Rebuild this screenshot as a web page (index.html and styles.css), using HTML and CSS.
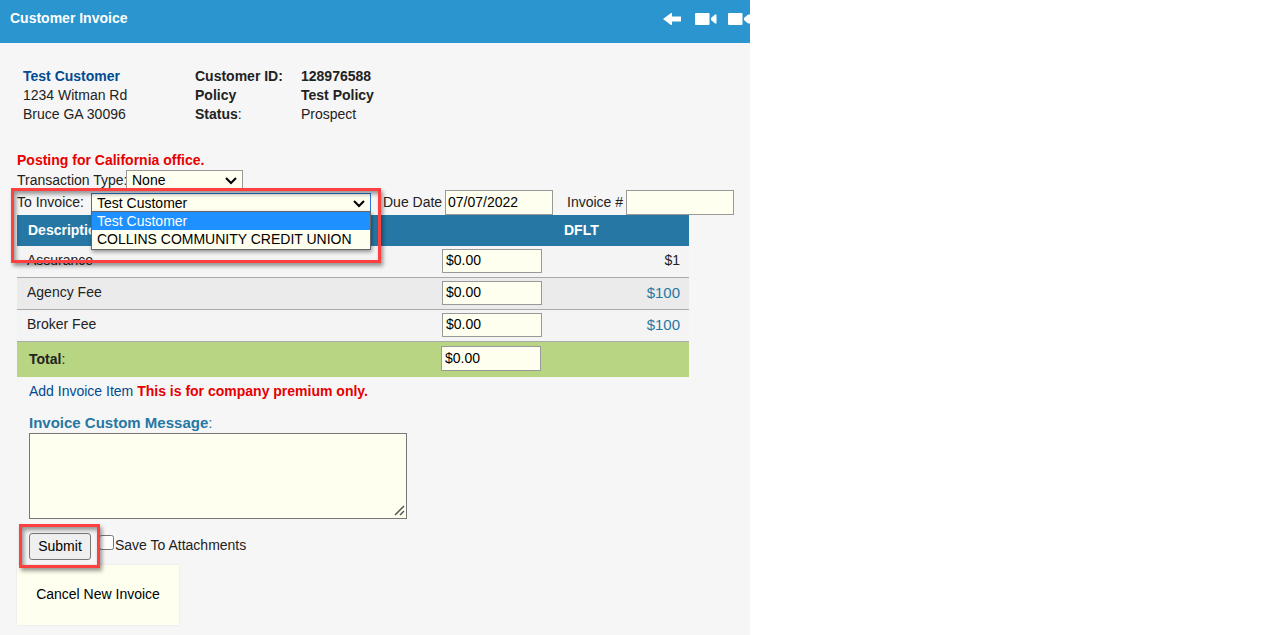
FILE: index.html
```html
<!DOCTYPE html>
<html lang="en">
<head>
    <meta charset="UTF-8">
    <meta name="viewport" content="width=device-width, initial-scale=1.0">
    <title>Customer Invoice</title>
    <link rel="stylesheet" href="styles.css">
</head>
<body>
    <div class="container">
        <header class="top-bar">
            <h1>Customer Invoice</h1>
            <div class="top-icons">
                <button type="button" class="icon-button" aria-label="Back">
                    <svg width="18" height="12" viewBox="0 0 18 12" fill="#fff"><path d="M0 6 8 0H9V3.500H18V8.500H9V12H8Z"/></svg>
                </button>
                <button type="button" class="icon-button" aria-label="Video">
                    <svg width="22" height="12" viewBox="0 0 22 12" fill="#fff"><rect width="14.500" height="12" rx="1"/><path d="M16 5 20 1.500H21.500V10.500H20L16 7Z"/></svg>
                </button>
                <button type="button" class="icon-button" aria-label="Video help">
                    <svg width="22" height="12" viewBox="0 0 22 12" fill="#fff"><rect width="14.500" height="12" rx="1"/><path d="M16 5 20 1.500H22V10.500H20L16 7Z"/></svg>
                </button>
            </div>
        </header>

        <form class="invoice-form">
            <div class="customer-info">
                <div>
                    <a href="#" class="customer-name">Test Customer</a><br>
                    1234 Witman Rd<br>
                    Bruce GA 30096
                </div>
                <div>
                    <b>Customer ID:</b><br>
                    <b>Policy</b><br>
                    <b>Status</b>:
                </div>
                <div>
                    <b>128976588</b><br>
                    <b>Test Policy</b><br>
                    Prospect
                </div>
            </div>

            <p class="warning">Posting for California office.</p>

            <div class="form-row type-row">
                <label for="transactionType">Transaction Type:</label>
                <div class="dropdown">
                    <select id="transactionType" name="transactionType">
                        <option>None</option>
                    </select>
                    <svg class="arrow" width="12" height="8" viewBox="0 0 12 8"><path d="M1 1 6 6 11 1" fill="none" stroke="#000" stroke-width="2"/></svg>
                </div>
            </div>

            <div class="form-row">
                <div class="to-invoice highlight">
                    <label for="toInvoice">To Invoice:</label>
                    <div class="dropdown open">
                        <select id="toInvoice" name="toInvoice">
                            <option>Test Customer</option>
                            <option>COLLINS COMMUNITY CREDIT UNION</option>
                        </select>
                        <svg class="arrow" width="12" height="8" viewBox="0 0 12 8"><path d="M1 1 6 6 11 1" fill="none" stroke="#000" stroke-width="2"/></svg>
                        <ul class="dropdown-list">
                            <li class="selected">Test Customer</li>
                            <li>COLLINS COMMUNITY CREDIT UNION</li>
                        </ul>
                    </div>
                </div>
                <label for="dueDate" class="due-label">Due Date</label>
                <input type="text" id="dueDate" name="dueDate" value="07/07/2022">
                <label for="invoiceNo" class="number-label">Invoice #</label>
                <input type="text" id="invoiceNo" name="invoiceNo">
            </div>

            <table class="items">
                <thead>
                    <tr>
                        <th class="desc">Description</th>
                        <th class="amount"></th>
                        <th class="default">DFLT</th>
                    </tr>
                </thead>
                <tbody>
                    <tr>
                        <td><label for="assurance">Assurance</label></td>
                        <td><input type="text" id="assurance" value="$0.00"></td>
                        <td class="price">$1</td>
                    </tr>
                    <tr>
                        <td><label for="agencyFee">Agency Fee</label></td>
                        <td><input type="text" id="agencyFee" value="$0.00"></td>
                        <td class="price"><a href="#">$100</a></td>
                    </tr>
                    <tr>
                        <td><label for="brokerFee">Broker Fee</label></td>
                        <td><input type="text" id="brokerFee" value="$0.00"></td>
                        <td class="price"><a href="#">$100</a></td>
                    </tr>
                </tbody>
                <tfoot>
                    <tr>
                        <td><label for="total"><b>Total</b>:</label></td>
                        <td><input type="text" id="total" value="$0.00"></td>
                        <td></td>
                    </tr>
                </tfoot>
            </table>

            <div class="form-footer">
                <p class="add-item"><a href="#">Add Invoice Item</a> <span class="warning">This is for company premium only.</span></p>
                <label for="message" class="message-label"><b>Invoice Custom Message</b>:</label>
                <div class="message-box">
                    <textarea id="message" name="message"></textarea>
                    <svg class="grip" width="11" height="11" viewBox="0 0 11 11"><path d="M1 10 10 1M6 10 10 6" fill="none" stroke="#555" stroke-width="1.500"/></svg>
                </div>
                <div class="submit-row">
                    <div class="submit-wrap highlight">
                        <button type="submit" class="submit-button">Submit</button>
                    </div>
                    <input type="checkbox" id="saveAttachments">
                    <label for="saveAttachments">Save To Attachments</label>
                </div>
            </div>

            <button type="button" class="cancel-button">Cancel New Invoice</button>
        </form>
    </div>
</body>
</html>
```
FILE: styles.css
```css
* {
    box-sizing: border-box;
}

body {
    font-family: "Liberation Sans", Arial, sans-serif;
    font-size: 14px;
    line-height: 19px;
    margin: 0;
    background-color: #fff;
    color: #222;
}

.container {
    max-width: 750px;
    min-height: 100vh;
    background-color: #f6f6f6;
}

.top-bar {
    display: flex;
    justify-content: space-between;
    height: 43px;
    padding: 9px 0 0 10px;
    background-color: #2a95ce;
    overflow: hidden;
}

h1 {
    margin: 0;
    font-size: 14px;
    line-height: 19px;
    color: #fff;
}

.top-icons {
    display: flex;
    align-items: flex-start;
    gap: 11px;
    padding-top: 4px;
}

.icon-button {
    display: flex;
    padding: 0;
    border: none;
    background: none;
    cursor: pointer;
}

.icon-button:first-child {
    margin-right: 3px;
}

.invoice-form {
    padding: 24px 16px 9px 17px;
}

.customer-info {
    display: grid;
    grid-template-columns: 172px 106px 1fr;
    padding-left: 6px;
    margin-bottom: 26px;
}

a {
    color: #004b91;
    text-decoration: none;
}

.customer-name {
    font-weight: bold;
}

.warning {
    margin: 0;
    font-weight: bold;
    color: #e60000;
}

p.warning {
    line-height: 20px;
}

.form-row {
    display: flex;
    align-items: center;
    height: 25px;
}

.type-row {
    height: 20px;
}

.type-row label {
    width: 109px;
    white-space: nowrap;
}

input,
select,
textarea,
button {
    font-family: inherit;
    font-size: 14px;
}

input[type="text"],
select,
textarea {
    background-color: #fffff0;
    border: 1px solid #999;
    border-radius: 0;
    color: #000;
    outline: none;
}

input[type="text"] {
    width: 108px;
    height: 25px;
    padding: 0 3px 2px 2px;
}

select {
    appearance: none;
    display: block;
    width: 117px;
    height: 20px;
    padding: 0 5px;
}

.dropdown {
    position: relative;
}

.arrow {
    position: absolute;
    top: 7px;
    right: 6px;
    pointer-events: none;
}

.to-invoice {
    display: flex;
    align-items: center;
    width: 354px;
}

.to-invoice label {
    width: 74px;
}

/* red callout frame */
.highlight {
    position: relative;
}

.highlight::after {
    content: "";
    position: absolute;
    z-index: 3;
    border: 3px solid #ff4040;
    box-shadow: 2px 3px 4px rgba(0, 0, 0, 0.4), inset 2px 3px 4px rgba(0, 0, 0, 0.4);
    pointer-events: none;
}

.to-invoice::after {
    inset: -5px -10px -50px -6px;
}

.open {
    flex: 1;
}

.open select {
    width: 100%;
    border-color: #2a74d5;
}

.dropdown-list {
    position: absolute;
    z-index: 2;
    top: 18px;
    left: 0;
    right: 0;
    margin: 0;
    padding: 0 0 1px;
    list-style: none;
    border: 1px solid #666;
    background-color: #fffff0;
    color: #000;
    line-height: 18px;
    box-shadow: 1px 2px 4px rgba(0, 0, 0, 0.4);
}

.dropdown-list li {
    padding-left: 5px;
    white-space: nowrap;
}

.dropdown-list .selected {
    background-color: #1e90ff;
    color: #fff;
}

.due-label {
    width: 62px;
    margin-left: 12px;
}

.number-label {
    width: 59px;
    margin-left: 14px;
}

.items {
    width: 672px;
    max-width: 100%;
    table-layout: fixed;
    border-collapse: separate;
    border-spacing: 0;
}

.items th {
    height: 31px;
    padding: 0 11px;
    background-color: #2677a4;
    color: #fff;
    text-align: left;
}

.items .amount {
    width: 111px;
}

.items .default {
    width: 136px;
}

.items td {
    height: 32px;
    padding: 0 10px 2px;
    border-bottom: 1px solid #aaa;
    background-color: #f4f4f4;
}

.items td:nth-child(2) {
    padding: 0 0 2px;
}

.items tbody tr:nth-child(2) td {
    background-color: #ebebeb;
}

.items td input[type="text"] {
    display: block;
    width: 100px;
    height: 24px;
    padding-left: 3px;
}

.items td.price {
    padding-right: 9px;
    text-align: right;
}

.price a {
    font-size: 15px;
    color: #2677a4;
}

.items tfoot td {
    height: 35px;
    padding: 0 12px;
    border-bottom: none;
    background-color: #b7d583;
}

.items tfoot input[type="text"] {
    height: 25px;
    margin-left: -1px;
}

.form-footer {
    padding: 5px 0 0 12px;
}

.add-item {
    margin: 0 0 12px;
}

.message-label {
    display: block;
    font-size: 15px;
    line-height: 20px;
    color: #2677a4;
}

.message-box {
    position: relative;
    width: 378px;
    max-width: 100%;
}

textarea {
    display: block;
    width: 100%;
    height: 86px;
    border-color: #767676;
    resize: none;
}

.grip {
    position: absolute;
    right: 2px;
    bottom: 3px;
}

.submit-row {
    display: flex;
    align-items: center;
    padding: 14px 0 5px;
}

.submit-wrap::after {
    inset: -9px -9px -8px -10px;
}

.submit-button {
    display: block;
    width: 62px;
    height: 27px;
    padding: 0 0 1px;
    border: 1px solid #767676;
    border-radius: 3px;
    background-color: #efefef;
    color: #000;
}

.submit-row input {
    width: 15px;
    height: 15px;
    margin: 0 1px 8px 8px;
}

.submit-row label {
    padding-bottom: 2px;
}

.cancel-button {
    display: block;
    width: 162px;
    height: 60px;
    padding: 0 0 2px;
    border: none;
    background-color: #fffff0;
    color: #000;
    box-shadow: 0 0 2px rgba(0, 0, 0, 0.1);
}
```
